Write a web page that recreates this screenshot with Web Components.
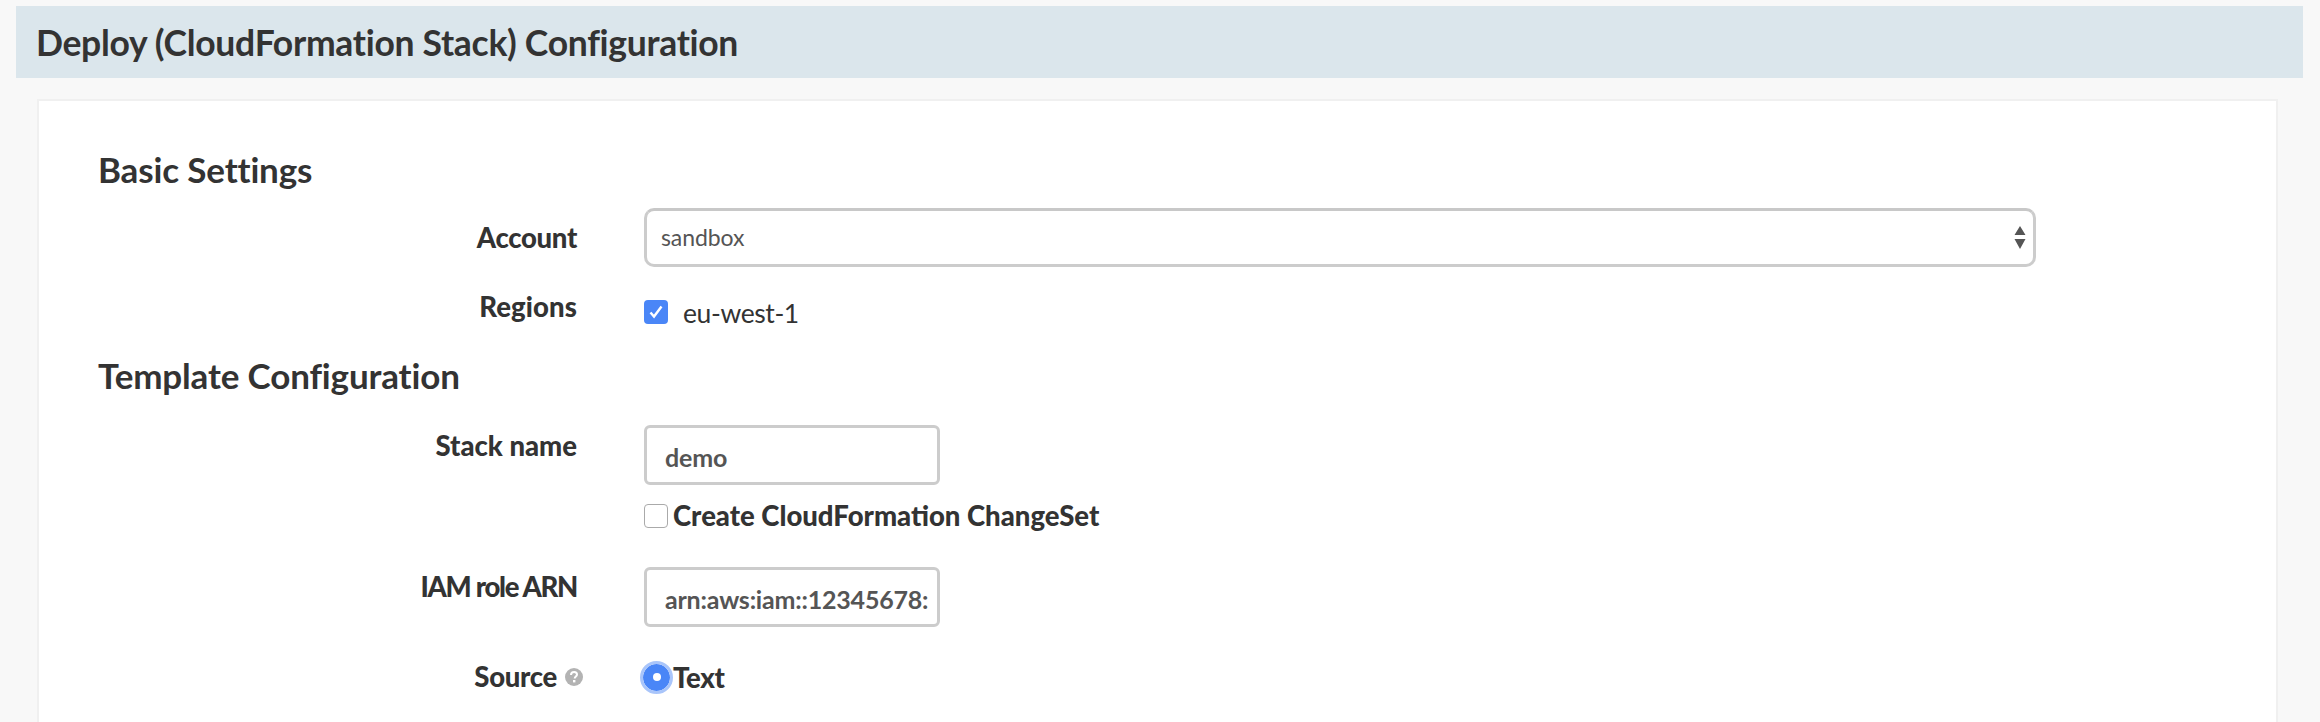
<!DOCTYPE html>
<html lang="en"><head><meta charset="utf-8"><title>Deploy Configuration</title>
<style>
html,body{margin:0;height:722px;overflow:hidden;background:#f8f8f8}
body{font-family:Lato,"Noto Sans",sans-serif;color:#333}
</style></head><body>
<deploy-page>
  <stage-header>Deploy (CloudFormation Stack) Configuration</stage-header>
  <form-card>
    <section-title style="margin-bottom:18px">Basic Settings</section-title>
    <form-row style="--offset:12px;margin-bottom:24px"><span slot="label">Account</span><select-box value="sandbox"></select-box></form-row>
    <form-row style="margin-bottom:30px;--offset:-2px"><span slot="label" style="letter-spacing:.1px">Regions</span><check-option checked>eu-west-1</check-option></form-row>
    <section-title style="margin-bottom:29px">Template Configuration</section-title>
    <form-row style="--offset:3px;margin-bottom:38px"><span slot="label" style="letter-spacing:0">Stack name</span>
      <text-box>demo</text-box>
      <check-option bold style="margin-top:19px">Create CloudFormation ChangeSet</check-option>
    </form-row>
    <form-row style="--offset:2px;margin-bottom:32px"><span slot="label" style="letter-spacing:-1.300px">IAM role ARN</span><text-box>arn:aws:iam::12345678:</text-box></form-row>
    <form-row center><span slot="label" style="display:inline-flex;align-items:center;gap:8px;margin-right:-6px">Source <help-icon></help-icon></span><radio-option>Text</radio-option></form-row>
  </form-card>
</deploy-page>
<script>
function def(name, css, html){
  customElements.define(name, class extends HTMLElement{
    constructor(){super();this.attachShadow({mode:'open'}).innerHTML='<style>'+css+'</style>'+(typeof html==='function'?html(this):html);}
  });
}
def('deploy-page',':host{display:block;padding:6px 17px 0 16px}','<slot></slot>');
def('stage-header',`:host{display:block;height:72px;line-height:74px;background:#dbe6ec;padding-left:20px;font-size:35.5px;font-weight:700;letter-spacing:-.3px;color:#333}`,'<slot></slot>');
def('form-card',`:host{display:block;box-sizing:border-box;margin:21px 25px 0 21px;height:640px;background:#fff;border:2px solid #f0f0f0;border-bottom:0;padding:49px 0 0 59px;overflow:hidden}`,'<slot></slot>');
def('section-title',`:host{display:block;height:40px;line-height:38px;font-size:35px;font-weight:700;letter-spacing:-.15px;color:#333}`,'<slot></slot>');
def('form-row',`:host{display:grid;grid-template-columns:479px 1fr;column-gap:67px;align-items:start}
:host([center]){align-items:center}
.l{text-align:right;font-size:27.5px;font-weight:900;line-height:36px;margin-top:var(--offset,0);letter-spacing:-.3px;color:#333;display:flex;justify-content:flex-end;align-items:center}
.f{display:flex;flex-direction:column;align-items:flex-start;min-width:0}`,
'<div class="l"><slot name="label"></slot></div><div class="f"><slot></slot></div>');
def('select-box',`:host{display:flex;align-items:center;justify-content:space-between;box-sizing:border-box;width:1392px;height:59px;border:3px solid #ccc;border-top-color:#c8c8c8;border-radius:10px;padding:0 7px 2px 14px;font-size:23px;letter-spacing:-.1px;color:#555;background:#fff}
svg{display:block;margin-top:2px}`,
h=>`<span>${h.getAttribute('value')}</span><svg width="12" height="23" viewBox="0 0 12 23"><path d="M6 0l5.500 9H.5zM6 23L.5 13h11z" fill="#555"/></svg>`);
def('text-box',`:host{display:block;box-sizing:border-box;width:296px;height:60px;border:3px solid #ccc;border-radius:6px;padding:13px 18px 0 18px;font-size:25px;font-weight:700;line-height:32px;letter-spacing:-.2px;color:#555;background:#fff;overflow:hidden;white-space:nowrap}`,'<slot></slot>');
def('check-option',`:host{display:flex;align-items:flex-start;color:#333;font-size:26.5px;letter-spacing:-.4px;line-height:26px;margin-top:9px}
.b{box-sizing:border-box;width:24px;height:24px;border-radius:4px;flex:none;margin-right:15px;background:#4a86f7;display:flex;align-items:center;justify-content:center}
:host([bold]){font-weight:900;font-size:27.5px;letter-spacing:0;margin-top:0}
:host([bold]) .b{background:#fff;border:1.500px solid #aaa;margin-right:5px}
:host([bold]) .t{margin-top:-1px}
:host([bold]) svg{display:none}`,
`<span class="b"><svg width="20" height="20" viewBox="0 0 20 20"><path d="M4.500 10.500l3.500 4L15.500 4.500" fill="none" stroke="#fff" stroke-width="2.400"/></svg></span><span class="t"><slot></slot></span>`);
def('radio-option',`:host{display:flex;align-items:center;font-size:27.5px;font-weight:900;letter-spacing:-.3px;color:#333;margin-left:-4px;line-height:33px}
.r{box-sizing:border-box;width:33px;height:33px;border-radius:50%;background:#4a86f7;border:3.500px solid #a9c5fa;background-clip:padding-box;margin-right:0;display:flex;align-items:center;justify-content:center;flex:none}
.r i{display:block;width:8px;height:8px;border-radius:50%;background:#fff}`,
'<span class="r"><i></i></span><slot></slot>');
def('help-icon',`:host{display:inline-block;width:18px;height:18px}svg{display:block}`,
`<svg width="18" height="18" viewBox="0 0 18 18"><circle cx="9" cy="9" r="9" fill="#b3b3b3"/><path d="M6 7c0-2 1.500-3 3.100-3S12 5 12 6.600c0 2-2.300 2-2.300 4" fill="none" stroke="#fff" stroke-width="2"/><rect x="8" y="12" width="2.400" height="2.400" fill="#fff"/></svg>`);
</script>
</body></html>
